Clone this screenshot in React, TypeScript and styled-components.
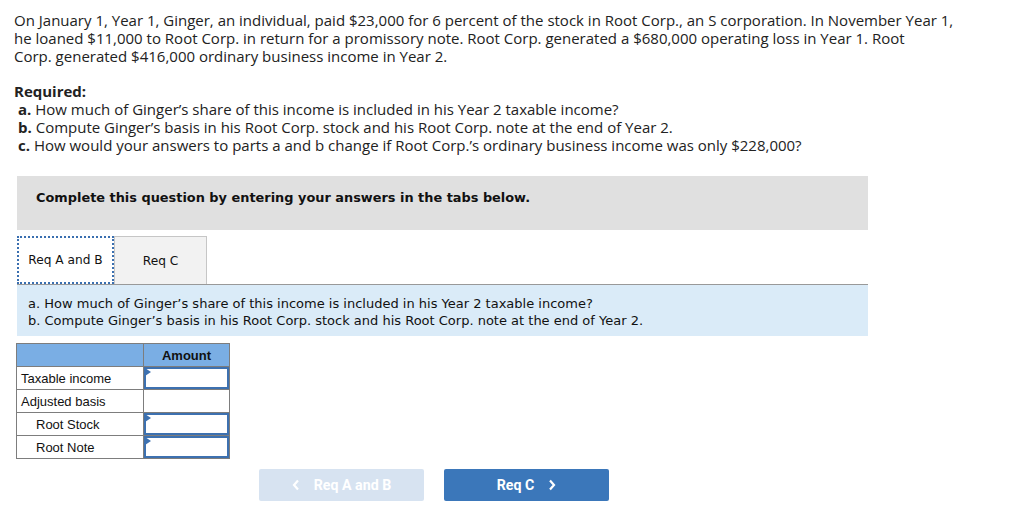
import React from 'react';
import styled, { createGlobalStyle } from 'styled-components';

const GlobalStyle = createGlobalStyle`
  body {
    margin: 0;
    background: #ffffff;
    color: #222222;
  }
`;

const Page = styled.div`
  padding: 11px 0 0 14px;
  width: 1000px;
`;

const Intro = styled.p`
  margin: 0;
  width: 980px;
  font-family: 'Open Sans', sans-serif;
  font-size: 15px;
  line-height: 18px;
  color: #222;
`;

const Required = styled.div`
  margin-top: 17px;
  font-family: 'Open Sans', sans-serif;
  font-size: 15px;
  line-height: 18px;
`;

const RequiredTitle = styled.div`
  font-weight: 700;
`;

const ReqLine = styled.div`
  padding-left: 4px;
  b {
    font-weight: 700;
  }
`;

const Widget = styled.div`
  margin: 22px 0 0 3px;
  width: 851px;
`;

const Instruction = styled.div`
  background: #e0e0e0;
  height: 54px;
  padding: 14px 0 0 19px;
  box-sizing: border-box;
  font-family: 'DejaVu Sans', Verdana, sans-serif;
  font-size: 12.9px;
  font-weight: 700;
  color: #111;
`;

const TabBar = styled.div`
  display: flex;
  margin-top: 6px;
  border-bottom: 1px solid #999;
`;

const Tab = styled.div<{ $active?: boolean }>`
  height: 48px;
  box-sizing: border-box;
  display: flex;
  align-items: center;
  justify-content: center;
  font-family: 'DejaVu Sans', Verdana, sans-serif;
  font-size: 12.2px;
  color: #111;
  background: ${({ $active }) => ($active ? '#ffffff' : '#f2f2f2')};
  border: ${({ $active }) => ($active ? '2px dotted #3a6fb0' : '1px solid #c6c6c6')};
  border-bottom: ${({ $active }) => ($active ? '2px dotted #3a6fb0' : 'none')};
  width: ${({ $active }) => ($active ? '97px' : '93px')};
  margin-bottom: ${({ $active }) => ($active ? '-1px' : '0')};
  position: relative;
  z-index: ${({ $active }) => ($active ? 1 : 0)};
`;

const Panel = styled.div`
  background: #daebf8;
  height: 51px;
  box-sizing: border-box;
  padding: 10px 0 0 11px;
  font-family: 'DejaVu Sans', Verdana, sans-serif;
  font-size: 13px;
  line-height: 17px;
  color: #111;
`;

const Table = styled.table`
  margin: 7px 0 0 -1px;
  border-collapse: collapse;
  font-family: 'Liberation Sans', Arial, sans-serif;
  font-size: 13px;
  color: #111;
`;

const HeadCell = styled.th<{ $w: number }>`
  width: ${({ $w }) => $w}px;
  height: 22px;
  padding: 0;
  background: #7aaee4;
  border: 1px solid #7d7d7d;
  font-weight: 700;
  text-align: center;
  font-size: 13px;
`;

const LabelCell = styled.td<{ $indent?: boolean }>`
  height: 22px;
  padding: 0 0 0 ${({ $indent }) => ($indent ? '19px' : '4px')};
  border: 1px solid #7d7d7d;
  white-space: nowrap;
`;

const InputCell = styled.td`
  padding: 0;
  border: 1px solid #7d7d7d;
`;

const Entry = styled.div`
  position: relative;
  height: 22px;
  box-sizing: border-box;
  border: 2px solid #3d71b0;
  background: #fff;
  &::before {
    content: '';
    position: absolute;
    left: -1px;
    top: -1px;
    border-top: 4px solid transparent;
    border-bottom: 4px solid transparent;
    border-left: 6px solid #3d71b0;
  }
`;

const Nav = styled.div`
  display: flex;
  gap: 20px;
  margin: 10px 0 0 242px;
`;

const NavButton = styled.button<{ $disabled?: boolean }>`
  width: 165px;
  height: 32px;
  border: none;
  border-radius: 2px;
  background: ${({ $disabled }) => ($disabled ? '#d7e3f1' : '#3b77ba')};
  color: #ffffff;
  font-family: Roboto, 'Liberation Sans', sans-serif;
  font-size: 14.2px;
  font-weight: 700;
  display: flex;
  align-items: center;
  justify-content: center;
  gap: 14px;
  cursor: pointer;
`;

const Chevron = ({ dir }: { dir: 'left' | 'right' }) => (
  <svg width="8" height="12" viewBox="0 0 8 12" fill="none">
    <path
      d={dir === 'left' ? 'M6 1.5 L2 6 L6 10.5' : 'M2 1.5 L6 6 L2 10.5'}
      stroke="#ffffff"
      strokeWidth="2.2"
    />
  </svg>
);

const App: React.FC = () => {
  return (
    <>
      <GlobalStyle />
      <Page>
        <Intro>
          On January 1, Year 1, Ginger, an individual, paid $23,000 for 6 percent of the stock in Root Corp., an S
          corporation. In November Year 1,
          <br />
          he loaned $11,000 to Root Corp. in return for a promissory note. Root Corp. generated a $680,000 operating loss
          in Year 1. Root
          <br />
          Corp. generated $416,000 ordinary business income in Year 2.
        </Intro>
        <Required>
          <RequiredTitle>Required:</RequiredTitle>
          <ReqLine>
            <b>a.</b> How much of Ginger’s share of this income is included in his Year 2 taxable income?
          </ReqLine>
          <ReqLine>
            <b>b.</b> Compute Ginger’s basis in his Root Corp. stock and his Root Corp. note at the end of Year 2.
          </ReqLine>
          <ReqLine>
            <b>c.</b> How would your answers to parts a and b change if Root Corp.’s ordinary business income was only
            $228,000?
          </ReqLine>
        </Required>
        <Widget>
          <Instruction>Complete this question by entering your answers in the tabs below.</Instruction>
          <TabBar>
            <Tab $active>Req A and B</Tab>
            <Tab>Req C</Tab>
          </TabBar>
          <Panel>
            a. How much of Ginger’s share of this income is included in his Year 2 taxable income?
            <br />
            b. Compute Ginger’s basis in his Root Corp. stock and his Root Corp. note at the end of Year 2.
          </Panel>
          <Table>
            <thead>
              <tr>
                <HeadCell $w={126} />
                <HeadCell $w={85}>Amount</HeadCell>
              </tr>
            </thead>
            <tbody>
              <tr>
                <LabelCell>Taxable income</LabelCell>
                <InputCell>
                  <Entry />
                </InputCell>
              </tr>
              <tr>
                <LabelCell>Adjusted basis</LabelCell>
                <InputCell />
              </tr>
              <tr>
                <LabelCell $indent>Root Stock</LabelCell>
                <InputCell>
                  <Entry />
                </InputCell>
              </tr>
              <tr>
                <LabelCell $indent>Root Note</LabelCell>
                <InputCell>
                  <Entry />
                </InputCell>
              </tr>
            </tbody>
          </Table>
          <Nav>
            <NavButton $disabled>
              <Chevron dir="left" />
              Req A and B
            </NavButton>
            <NavButton>
              Req C
              <Chevron dir="right" />
            </NavButton>
          </Nav>
        </Widget>
      </Page>
    </>
  );
};

export default App;
